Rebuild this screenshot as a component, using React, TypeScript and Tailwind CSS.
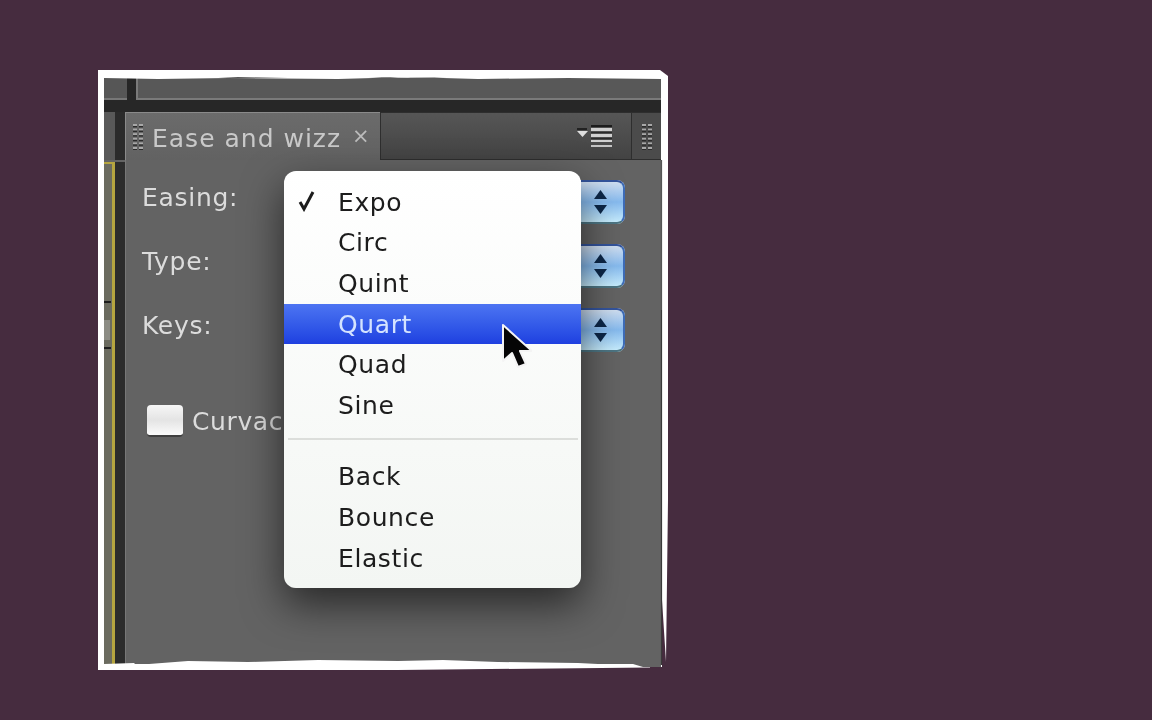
import React from 'react';

const EASINGS_TOP = ['Expo', 'Circ', 'Quint', 'Quart', 'Quad', 'Sine'];
const EASINGS_BOTTOM = ['Back', 'Bounce', 'Elastic'];

// Two columns of little dots, the panel gripper
const Grip = () => (
  <svg width="12" height="27" viewBox="0 0 12 27" className="shrink-0">
    {[0, 1, 2, 3, 4, 5].map((row) => (
      <g key={row}>
        <rect x="1" y={row * 4.6 + 1} width="4" height="2" fill="#a8a8a8" />
        <rect x="7" y={row * 4.6 + 1} width="4" height="2" fill="#a8a8a8" />
        <rect x="1" y={row * 4.6 + 3} width="4" height="1.4" fill="#2b2b2b" />
        <rect x="7" y={row * 4.6 + 3} width="4" height="1.4" fill="#2b2b2b" />
      </g>
    ))}
  </svg>
);

const PanelMenuIcon = () => (
  <svg width="36" height="24" viewBox="0 0 36 24">
    <rect x="0" y="4" width="10" height="2" fill="#222" />
    <path d="M0 7h11l-5.5 6z" fill="#dedede" />
    <rect x="14" y="1" width="21" height="2" fill="#1c1c1c" />
    <rect x="14" y="4" width="21" height="3" fill="#d0d0d0" />
    <rect x="14" y="8" width="21" height="1" fill="#2a2a2a" />
    <rect x="14" y="10" width="21" height="3" fill="#d0d0d0" />
    <rect x="14" y="14" width="21" height="1" fill="#2a2a2a" />
    <rect x="14" y="16" width="21" height="2" fill="#d0d0d0" />
    <rect x="14" y="21" width="21" height="2" fill="#c4c4c4" />
  </svg>
);

const Stepper = () => (
  <div className="flex h-[44px] w-[44px] shrink-0 flex-col items-center justify-center gap-[6px] rounded-r-[8px] border-t-2 border-r-2 border-b-2 border-t-[#34549c] border-r-[#3d6cb8] border-b-[#4d7583] bg-gradient-to-b from-[#cfdef0] via-[#86baee] to-[#c6ecfd] pr-[3px]">
    <svg width="13" height="9" viewBox="0 0 13 9"><path d="M6.5 0l6.5 9H0z" fill="#0d2748" /></svg>
    <svg width="13" height="9" viewBox="0 0 13 9"><path d="M0 0h13L6.5 9z" fill="#0d2748" /></svg>
  </div>
);

const SelectRow = ({ label }: { label: string }) => (
  <div className="flex h-[44px] items-center">
    <span className="mb-[10px] w-[143px] text-[25px] leading-none tracking-[0.7px] text-[#dcdcdc]">{label}</span>
    <div className="flex h-[44px] flex-1 justify-end rounded-[8px] bg-[#e9e9e9]">
      <Stepper />
    </div>
  </div>
);

const MenuItem = ({ text, active, checked }: { text: string; active?: boolean; checked?: boolean }) => (
  <div
    className={`relative flex h-[40.6px] items-center pl-[54px] text-[25px] leading-none tracking-[0.6px] ${
      active ? 'bg-gradient-to-b from-[#4d74f2] to-[#1f3fe0] text-[#d4e3ff]' : 'text-[#1c1c1c]'
    }`}
  >
    {checked && (
      <svg width="18" height="22" viewBox="0 0 18 22" className="absolute left-[14px] top-[8px]">
        <path d="M2 12l4 7L15 2" fill="none" stroke="#1c1c1c" strokeWidth="3" />
      </svg>
    )}
    {text}
  </div>
);

export default function App() {
  return (
    <div className="h-[720px] w-[1152px] overflow-hidden bg-[#462c3f] pl-[98px] pt-[70px] font-['DejaVu_Sans',sans-serif]">
      <div className="relative h-[600px] w-[570px] bg-white pb-[6px] pl-[6px] pr-[7px] pt-[7px] blur-[0.7px]">
        <div className="relative flex h-full flex-col bg-[#636363]">
          {/* top strip */}
          <div className="flex h-[23px] bg-[#575757]">
            <div className="w-[23px] border-b-2 border-[#777777] bg-[#565656]" />
            <div className="w-[9px] bg-[#262626]" />
            <div className="flex-1 border-b-2 border-l-2 border-[#7a7a7a] bg-[#585858]" />
          </div>
          <div className="h-[12px] bg-[#272727]" />

          {/* tab row */}
          <div className="flex h-[48px]">
            <div className="w-[11px] bg-[#595959]" />
            <div className="w-[10px] bg-[#2b2b2b]" />
            <div className="flex w-[255px] items-center gap-[8px] border-t border-l border-[#8a8a8a] bg-gradient-to-b from-[#6b6b6b] to-[#626262] pl-[6px]">
              <Grip />
              <span className="mt-[4px] text-[25px] leading-none tracking-[1px] text-[#c9c9c9]">Ease and wizz</span>
              <span className="ml-[3px] text-[21px] leading-none text-[#bcbcbc]">×</span>
            </div>
            <div className="flex flex-1 items-center justify-end border-y border-l border-[#2e2e2e] bg-gradient-to-b from-[#565656] to-[#434343] pr-[18px]">
              <PanelMenuIcon />
            </div>
            <div className="flex w-[30px] items-center justify-center border-y border-l border-[#2e2e2e] bg-[#4b4b4b]">
              <Grip />
            </div>
          </div>

          {/* body */}
          <div className="flex min-h-0 flex-1">
            <div className="mt-[2px] flex w-[21px]">
              <div className="w-[8px] border-t-2 border-[#b5a53f] bg-[#6b6b5f]" />
              <div className="w-[3px] bg-[#b5a53f]" />
              <div className="w-[10px] bg-[#2c2c2c]" />
            </div>
            <div className="flex flex-1 flex-col border-l border-[#777777] pl-[16px] pr-[36px] pt-[20px]">
              <div className="flex flex-col gap-[20px]">
                <SelectRow label="Easing:" />
                <SelectRow label="Type:" />
                <SelectRow label="Keys:" />
              </div>
              <div className="ml-[5px] mt-[52px] flex h-[34px] items-center gap-[9px]">
                <div className="h-[32px] w-[36px] rounded-[4px] border-b-2 border-[#3f3f3f] bg-gradient-to-b from-[#f6f6f6] via-[#e4e4e4] to-[#fbfbfb]" />
                <span className="text-[25px] leading-none tracking-[0.6px] text-[#dcdcdc]">Curvac</span>
              </div>
            </div>
          </div>

          {/* open popup menu */}
          <div className="absolute left-[180px] top-[94px] w-[297px] rounded-[12px] bg-gradient-to-b from-white to-[#f3f6f3] pb-[10px] pt-[11px] shadow-[0_16px_40px_rgba(0,0,0,0.6)]">
            {EASINGS_TOP.map((name) => (
              <MenuItem key={name} text={name} checked={name === 'Expo'} active={name === 'Quart'} />
            ))}
            <div className="mb-[17px] ml-[4px] mr-[3px] mt-[12px] h-[2px] bg-[#dcdedb]" />
            {EASINGS_BOTTOM.map((name) => (
              <MenuItem key={name} text={name} />
            ))}
          </div>

          {/* mouse pointer */}
          <svg width="32" height="48" viewBox="0 0 32 48" className="absolute left-[396px] top-[246px]">
            <path d="M3 2v36l9-8 6 14 8-3-6-13h12z" fill="#050505" stroke="#f4f4f4" strokeWidth="2" strokeLinejoin="round" />
          </svg>
        </div>

        {/* torn paper edges */}
        <svg width="570" height="600" viewBox="0 0 570 600" className="absolute left-0 top-0">
          <path d="M6 7H120L140 8 240 6 300 8 400 6 564 5V9L470 8 380 9 310 7 240 9 130 8 60 9 6 8z" fill="#ffffff" />
          <path d="M6 594L36 593 38 595 90 591 150 592 220 590 300 591 345 590 400 592 480 593 540 596 550 596 540 600H6z" fill="#ffffff" />
          <path d="M535 594H563V597H545z" fill="#636363" />
          <path d="M300 600L552 597.5H570V600z" fill="#462c3f" />
          <path d="M564 530L568 592 570 430V600H552V597L564 597z" fill="#462c3f" />
          <path d="M563.5 90V240" stroke="#555555" strokeWidth="1.2" fill="none" />
          <path d="M563.5 240V595" stroke="#3a3a3a" strokeWidth="1.2" fill="none" />
          <path d="M6 250h6v20H6z" fill="#8c8c84" />
          <path d="M6 232h7M6 278h7" stroke="#1d1d1d" strokeWidth="2" fill="none" />
          <path d="M562 0L570 6V0z" fill="#462c3f" />
        </svg>
      </div>
    </div>
  );
}
